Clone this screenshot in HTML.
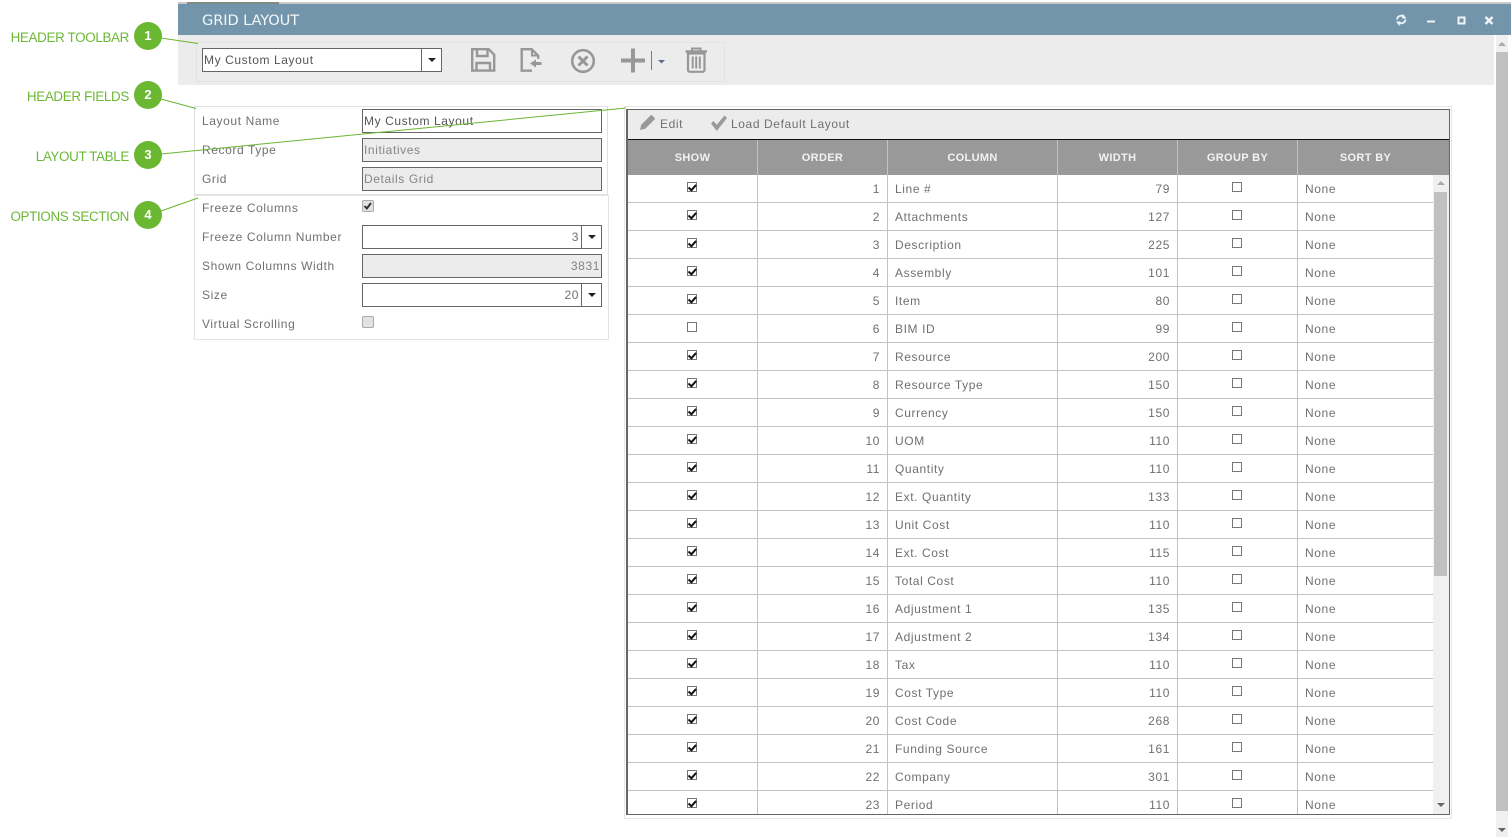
<!DOCTYPE html>
<html><head><meta charset="utf-8"><style>
html,body{margin:0;padding:0;background:#fff;width:1511px;height:839px;overflow:hidden}
body{position:relative;font-family:"Liberation Sans",sans-serif;font-size:12px;color:#707070}
.a{position:absolute;box-sizing:border-box}
.t{position:absolute;white-space:nowrap;letter-spacing:.6px;line-height:14px}
.in{position:absolute;box-sizing:border-box;left:362px;width:240px;height:24px;border:1px solid #666;background:#fff;line-height:22px;padding:0 1px;white-space:nowrap;letter-spacing:.6px}
.dis{background:#ececec;color:#858585}
.r{text-align:right}
.ar{position:absolute;right:0;top:0;bottom:0;width:19px;border-left:1px solid #666;background:#fff}
.ar:after{content:"";position:absolute;left:6px;top:9px;border:4px solid transparent;border-top:4px solid #222;border-bottom:0}
.co{position:absolute;right:1382px;font-size:13.4px;color:#6cb836;line-height:16px;white-space:nowrap;letter-spacing:-.33px}
.ci{position:absolute;left:134px;width:28px;height:28px;border-radius:50%;background:#6ab732;color:#fff;font-weight:bold;font-size:13px;line-height:28px;text-align:center}
.cb{position:absolute;left:362px;width:12px;height:12px;box-sizing:border-box;border:1px solid #aaa;border-radius:2px;background:#e2e2e2}
table{position:absolute;left:628px;top:140px;border-collapse:separate;border-spacing:0;table-layout:fixed;width:805px}
th{height:35px;padding:0;background:#999;color:#f2f2f2;font-size:11px;font-weight:bold;letter-spacing:.35px;border-right:1px solid #c4c4c4;box-sizing:border-box;text-align:center}
th:last-child{border-right:0}
td{height:28px;padding:0 7px;box-sizing:border-box;border-right:1px solid #c2c2c2;border-bottom:1px solid #c2c2c2;letter-spacing:.6px;white-space:nowrap;overflow:hidden;color:#707070;padding-top:1px}
td:last-child{border-right:0}
td:nth-child(2),td:nth-child(4){text-align:right}
td:nth-child(1),td:nth-child(5){text-align:center;padding:0 0 2px}
.k,.u{display:inline-block;width:10px;height:10px;border:1px solid #777;box-sizing:border-box;background:#fff;position:relative;vertical-align:middle;left:-1px;top:-1px}
.k:after{content:"";position:absolute;left:2.5px;top:0;width:3px;height:5.5px;border:solid #111;border-width:0 2px 2px 0;transform:rotate(42deg)}
.wrap{position:absolute;left:628px;top:140px;width:805px;height:674px;overflow:hidden}
.wrap table{left:0;top:0}
svg{position:absolute;overflow:visible}
</style></head><body>

<div class="a" style="left:178px;top:2px;width:1333px;height:2px;background:#c9c9c9"></div>
<div class="a" style="left:187px;top:2px;width:92px;height:2px;background:#7f8b82"></div>
<div class="a" style="left:178px;top:4px;width:1333px;height:31px;background:#7295ab"></div>
<div class="t" style="left:202px;top:11px;line-height:19px;color:#f3f6f8;letter-spacing:-.1px;font-family:'DejaVu Sans',sans-serif;font-size:14.6px">GRID LAYOUT</div>

<svg style="left:0;top:0" width="1511" height="839">
<g fill="none" stroke="#f1f4f6">
<path d="M1397 19.500a4.200 4.200 0 0 1 7.200-2.500" stroke-width="1.800"/><path d="M1405.500 19.500a4.200 4.200 0 0 1-7.200 2.500" stroke-width="1.800"/>
<path d="M1427 21.500h8" stroke-width="2"/>
<rect x="1458.500" y="17.500" width="6" height="6" stroke-width="2"/>
<path d="M1485.500 17l7 7M1492.500 17l-7 7" stroke-width="2.400"/>
</g>
<path d="M1403 14l3.500 4.500h-4.500zM1399.500 26l-3.500-4.500h4.500z" fill="#f1f4f6"/>
</svg>

<div class="a" style="left:178px;top:35px;width:1316px;height:50px;background:#ececec"></div>
<div class="a" style="left:196px;top:42px;width:529px;height:40px;border:1px solid #e3e3e3"></div>
<div class="in" style="left:202px;top:48px;width:240px;color:#555">My Custom Layout<span class="ar"></span></div>

<svg style="left:0;top:0" width="1511" height="839">
<g fill="none" stroke="#979797" stroke-width="2.400">
<path d="M472.200 49.200h16.500l5.500 5.500v15.900h-22z"/>
<path d="M477 49.500v6.500h10.500v-6.500" stroke-width="2.400"/>
<path d="M476.500 70.500v-7.500h13.500v7.500"/>
<path d="M532 70.700h-10.300v-21.500h10l6.500 6.500v3" />
<path d="M532 49.500v6h6" stroke-width="2"/>
<circle cx="583" cy="61" r="10.800" stroke-width="2.600"/>
<path d="M578.500 56.500l9 9M587.500 56.500l-9 9" stroke-width="3"/>
<path d="M621 60.500h24M633 48.500v24" stroke-width="4"/>
<path d="M688 53.500h16.500v16.500a1.800 1.800 0 0 1-1.800 1.800h-12.900a1.800 1.800 0 0 1-1.800-1.800z" stroke-width="2.200"/>
<path d="M685.500 51.500h21.500" stroke-width="2.400"/>
<path d="M692 50.500v-2h8.500v2" stroke-width="2"/>
<path d="M692.700 56.500v12M696.200 56.500v12M699.800 56.500v12" stroke-width="1.900"/>
</g>
<path d="M530 63.500l6-4v8zM536 62h5.500v3h-5.500z" fill="#979797"/>
<path d="M651.500 51v19" stroke="#6d7da6" stroke-width="1"/>
<path d="M658 60h7l-3.500 3.500z" fill="#5a6a92"/>
</svg>

<div class="a" style="left:194px;top:106px;width:414px;height:89px;border:1px solid #e0e0e0"></div>
<div class="a" style="left:194px;top:195px;width:415px;height:145px;border:1px solid #e4e4e4"></div>
<div class="t" style="left:202px;top:114px">Layout Name</div>
<div class="t" style="left:202px;top:143px">Record Type</div>
<div class="t" style="left:202px;top:172px">Grid</div>
<div class="t" style="left:202px;top:201px">Freeze Columns</div>
<div class="t" style="left:202px;top:230px">Freeze Column Number</div>
<div class="t" style="left:202px;top:259px">Shown Columns Width</div>
<div class="t" style="left:202px;top:288px">Size</div>
<div class="t" style="left:202px;top:317px">Virtual Scrolling</div>

<div class="in" style="top:109px;color:#555">My Custom Layout</div>
<div class="in dis" style="top:138px">Initiatives</div>
<div class="in dis" style="top:167px">Details Grid</div>
<div class="cb" style="top:200px"></div>
<svg style="left:0;top:0" width="1511" height="839"><path d="M364.500 206l2.300 2.500 4.200-5.500" fill="none" stroke="#333" stroke-width="2"/></svg>
<div class="in r" style="top:225px;padding-right:22px">3<span class="ar"></span></div>
<div class="in dis r" style="top:254px">3831</div>
<div class="in r" style="top:283px;padding-right:22px">20<span class="ar"></span></div>
<div class="cb" style="top:316px"></div>

<div class="a" style="left:624px;top:106px;width:828px;height:713px;border:1px solid #e6e6e6"></div>
<div class="a" style="left:626px;top:109px;width:824px;height:706px;border:1px solid #666;border-left-width:2px;background:#fff"></div>
<div class="a" style="left:628px;top:110px;width:821px;height:29px;background:#ececec"></div>
<div class="a" style="left:628px;top:139px;width:821px;height:1px;background:#111"></div>
<div class="t" style="left:660px;top:117px">Edit</div>
<div class="t" style="left:731px;top:117px">Load Default Layout</div>
<svg style="left:0;top:0" width="1511" height="839">
<path d="M640 130l1.200-5.200 9.300-9.300a1.300 1.300 0 0 1 1.800 0l2.200 2.200a1.300 1.300 0 0 1 0 1.800l-9.300 9.300z" fill="#999"/>
<path d="M711 123.500l2.500-2.500 3.300 3.800 7.700-9.300 2.500 2.500-10.200 13z" fill="#999"/>
</svg>

<div class="wrap">
<table>
<colgroup><col style="width:130px"><col style="width:130px"><col style="width:170px"><col style="width:120px"><col style="width:120px"><col style="width:135px"></colgroup>
<tr><th>SHOW</th><th>ORDER</th><th>COLUMN</th><th>WIDTH</th><th>GROUP BY</th><th>SORT BY</th></tr>
<tr><td><i class="k"></i></td><td>1</td><td>Line #</td><td>79</td><td><i class="u"></i></td><td>None</td></tr>
<tr><td><i class="k"></i></td><td>2</td><td>Attachments</td><td>127</td><td><i class="u"></i></td><td>None</td></tr>
<tr><td><i class="k"></i></td><td>3</td><td>Description</td><td>225</td><td><i class="u"></i></td><td>None</td></tr>
<tr><td><i class="k"></i></td><td>4</td><td>Assembly</td><td>101</td><td><i class="u"></i></td><td>None</td></tr>
<tr><td><i class="k"></i></td><td>5</td><td>Item</td><td>80</td><td><i class="u"></i></td><td>None</td></tr>
<tr><td><i class="u"></i></td><td>6</td><td>BIM ID</td><td>99</td><td><i class="u"></i></td><td>None</td></tr>
<tr><td><i class="k"></i></td><td>7</td><td>Resource</td><td>200</td><td><i class="u"></i></td><td>None</td></tr>
<tr><td><i class="k"></i></td><td>8</td><td>Resource Type</td><td>150</td><td><i class="u"></i></td><td>None</td></tr>
<tr><td><i class="k"></i></td><td>9</td><td>Currency</td><td>150</td><td><i class="u"></i></td><td>None</td></tr>
<tr><td><i class="k"></i></td><td>10</td><td>UOM</td><td>110</td><td><i class="u"></i></td><td>None</td></tr>
<tr><td><i class="k"></i></td><td>11</td><td>Quantity</td><td>110</td><td><i class="u"></i></td><td>None</td></tr>
<tr><td><i class="k"></i></td><td>12</td><td>Ext. Quantity</td><td>133</td><td><i class="u"></i></td><td>None</td></tr>
<tr><td><i class="k"></i></td><td>13</td><td>Unit Cost</td><td>110</td><td><i class="u"></i></td><td>None</td></tr>
<tr><td><i class="k"></i></td><td>14</td><td>Ext. Cost</td><td>115</td><td><i class="u"></i></td><td>None</td></tr>
<tr><td><i class="k"></i></td><td>15</td><td>Total Cost</td><td>110</td><td><i class="u"></i></td><td>None</td></tr>
<tr><td><i class="k"></i></td><td>16</td><td>Adjustment 1</td><td>135</td><td><i class="u"></i></td><td>None</td></tr>
<tr><td><i class="k"></i></td><td>17</td><td>Adjustment 2</td><td>134</td><td><i class="u"></i></td><td>None</td></tr>
<tr><td><i class="k"></i></td><td>18</td><td>Tax</td><td>110</td><td><i class="u"></i></td><td>None</td></tr>
<tr><td><i class="k"></i></td><td>19</td><td>Cost Type</td><td>110</td><td><i class="u"></i></td><td>None</td></tr>
<tr><td><i class="k"></i></td><td>20</td><td>Cost Code</td><td>268</td><td><i class="u"></i></td><td>None</td></tr>
<tr><td><i class="k"></i></td><td>21</td><td>Funding Source</td><td>161</td><td><i class="u"></i></td><td>None</td></tr>
<tr><td><i class="k"></i></td><td>22</td><td>Company</td><td>301</td><td><i class="u"></i></td><td>None</td></tr>
<tr><td><i class="k"></i></td><td>23</td><td>Period</td><td>110</td><td><i class="u"></i></td><td>None</td></tr>
</table>
</div>
<div class="a" style="left:1433px;top:140px;width:16px;height:35px;background:#999"></div>
<div class="a" style="left:1433px;top:175px;width:16px;height:639px;background:#f0f0f0"></div>
<div class="a" style="left:1434px;top:192px;width:13px;height:384px;background:#c0c0c0"></div>
<div class="a" style="left:1437px;top:181px;border:4px solid transparent;border-bottom:4px solid #aaa;border-top:0"></div>
<div class="a" style="left:1437px;top:803px;border:4px solid transparent;border-top:4px solid #666;border-bottom:0"></div>

<div class="a" style="left:1496px;top:35px;width:12px;height:802px;background:#f0f0f0"></div>
<div class="a" style="left:1496px;top:52px;width:12px;height:759px;background:#c0c0c0"></div>
<div class="a" style="left:1498px;top:42px;border:4px solid transparent;border-bottom:4px solid #aaa;border-top:0"></div>
<div class="a" style="left:1498px;top:828px;border:4px solid transparent;border-top:4px solid #666;border-bottom:0"></div>

<svg style="left:0;top:0" width="1511" height="839">
<g stroke="#6ab732" stroke-width="1" fill="none">
<path d="M161 38L198 43.500M161 99L196 108.500M161 154L626 108M161 211L198 198"/>
</g>
</svg>
<div class="co" style="top:30px">HEADER TOOLBAR</div>
<div class="co" style="top:89px">HEADER FIELDS</div>
<div class="co" style="top:149px">LAYOUT TABLE</div>
<div class="co" style="top:209px">OPTIONS SECTION</div>
<div class="ci" style="top:22px">1</div>
<div class="ci" style="top:81px">2</div>
<div class="ci" style="top:141px">3</div>
<div class="ci" style="top:201px">4</div>
</body></html>
